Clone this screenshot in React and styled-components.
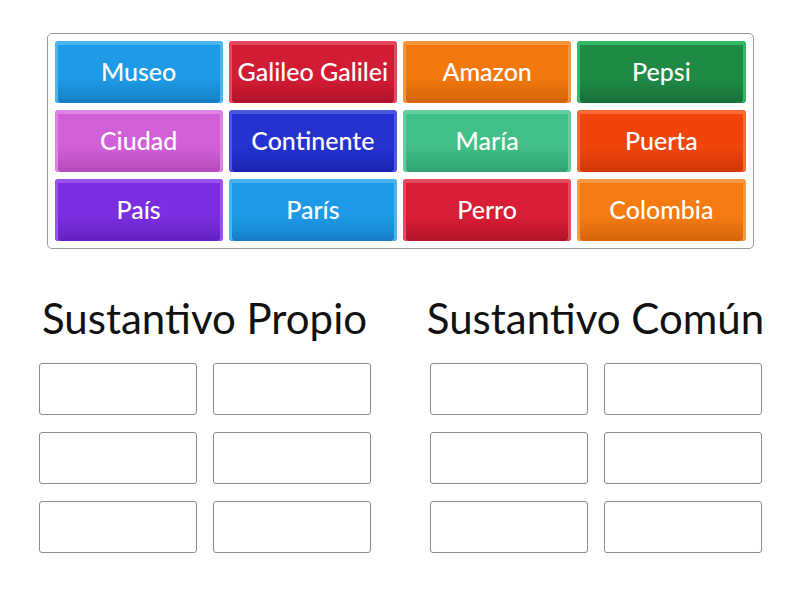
import styled, { createGlobalStyle } from "styled-components";

const TILES = [
  { label: "Museo", color: "#1e9be6", light: "#4ab4f0", dark: "#1580c8" },
  { label: "Galileo Galilei", color: "#d21c34", light: "#e44a5c", dark: "#b0142a" },
  { label: "Amazon", color: "#f2780c", light: "#f8963e", dark: "#d4640a" },
  { label: "Pepsi", color: "#1f8a45", light: "#30bb62", dark: "#18703a" },
  { label: "Ciudad", color: "#d060d8", light: "#de84e4", dark: "#b44cbc" },
  { label: "Continente", color: "#2432d0", light: "#4a58e0", dark: "#1a24b0" },
  { label: "María", color: "#40bf86", light: "#62cf9c", dark: "#33a472" },
  { label: "Puerta", color: "#f0440c", light: "#f86a36", dark: "#d0380a" },
  { label: "País", color: "#7a2ee0", light: "#9a52f0", dark: "#6422c4" },
  { label: "París", color: "#1e9ae6", light: "#4ab4f0", dark: "#1580c8" },
  { label: "Perro", color: "#d81d35", light: "#e64a5e", dark: "#b4152b" },
  { label: "Colombia", color: "#f57a12", light: "#fa9a44", dark: "#d6660c" },
];

const GROUPS = ["Sustantivo Propio", "Sustantivo Común"];

const App = () => {
  return (
    <Page>
      <GlobalStyle />
      <TileBoard>
        {TILES.map((tile) => (
          <Tile key={tile.label} $color={tile.color} $light={tile.light} $dark={tile.dark}>
            {tile.label}
          </Tile>
        ))}
      </TileBoard>
      <Groups>
        {GROUPS.map((group) => (
          <Group key={group}>
            <GroupTitle>{group}</GroupTitle>
            <SlotGrid>
              {Array.from({ length: 6 }).map((_, i) => (
                <Slot key={i} />
              ))}
            </SlotGrid>
          </Group>
        ))}
      </Groups>
    </Page>
  );
};

export default App;

const GlobalStyle = createGlobalStyle`
  body {
    margin: 0;
    background: #fff;
    font-family: Lato, "Noto Sans", sans-serif;
  }
`;

const Page = styled.div`
  width: 800px;
  height: 600px;
  display: flex;
  flex-direction: column;
  align-items: center;
  padding-top: 33px;
  box-sizing: border-box;
`;

const TileBoard = styled.div`
  width: 707px;
  box-sizing: border-box;
  border: 1px solid #9a9a9a;
  border-radius: 5px;
  padding: 7px;
  display: grid;
  grid-template-columns: repeat(4, 1fr);
  grid-auto-rows: 62px;
  column-gap: 6px;
  row-gap: 7px;
`;

const Tile = styled.div`
  display: flex;
  align-items: center;
  justify-content: center;
  border-radius: 4px;
  color: #fff;
  font-size: 25px;
  font-weight: 500;
  white-space: nowrap;
  background: linear-gradient(to bottom, ${(p) => p.$color} 60%, ${(p) => p.$dark});
  box-shadow:
    inset 0 4px 0 ${(p) => p.$light},
    inset 3px 0 0 ${(p) => p.$light},
    inset -3px 0 0 ${(p) => p.$light},
    inset 0 -4px 0 ${(p) => p.$dark};
  padding-bottom: 2px;
`;

const Groups = styled.div`
  display: flex;
  gap: 59px;
  margin-top: 44px;
`;

const Group = styled.div`
  width: 332px;
  display: flex;
  flex-direction: column;
  align-items: center;
`;

const GroupTitle = styled.div`
  font-size: 42px;
  font-weight: 400;
  color: #111;
  line-height: 50px;
  white-space: nowrap;
  margin-bottom: 20px;
`;

const SlotGrid = styled.div`
  width: 100%;
  display: grid;
  grid-template-columns: repeat(2, 158px);
  grid-auto-rows: 52px;
  column-gap: 16px;
  row-gap: 17px;
`;

const Slot = styled.div`
  border: 1px solid #8c8c8c;
  border-radius: 3px;
  background: #fff;
`;
